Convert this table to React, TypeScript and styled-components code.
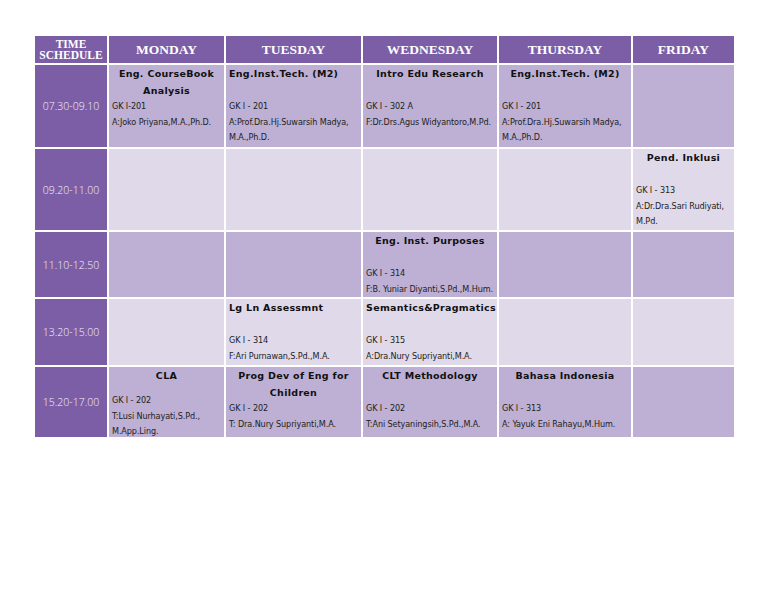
import React from 'react'
import styled, { createGlobalStyle } from 'styled-components'

const GlobalStyle = createGlobalStyle`
  html, body {
    margin: 0;
    padding: 0;
    background: #ffffff;
  }
`

const Page = styled.div`
  width: 768px;
  height: 594px;
  padding: 36px 0 0 35px;
  box-sizing: border-box;
  background: #ffffff;
`

const Grid = styled.div`
  display: grid;
  grid-template-columns: 72px 115px 135px 134px 132px 101px;
  grid-template-rows: 27px 82px 81px 65px 66px 70px;
  gap: 2px;
  width: 699px;
  background: #ffffff;
`

const HeadCell = styled.div<{ $small?: boolean }>`
  background: #7b5ea6;
  color: #ffffff;
  display: flex;
  align-items: center;
  justify-content: center;
  text-align: center;
  font-family: "Liberation Serif", "Times New Roman", serif;
  font-weight: bold;
  font-size: ${(p) => (p.$small ? '11.5px' : '13.5px')};
  line-height: ${(p) => (p.$small ? '11px' : '16px')};
`

const TimeCell = styled.div`
  background: #7b5ea6;
  color: #f4f0fa;
  display: flex;
  align-items: center;
  justify-content: center;
  font-family: "Open Sans", "Liberation Sans", Arial, sans-serif;
  font-weight: 300;
  font-size: 10.5px;
`

const SlotCell = styled.div<{ $light: boolean }>`
  background: ${(p) => (p.$light ? '#dfd9ea' : '#bdb0d4')};
  padding: 0 3px;
  box-sizing: border-box;
  overflow: hidden;
`

const Title = styled.div<{ $tight?: boolean; $left?: boolean }>`
  font-family: "DejaVu Sans", Verdana, sans-serif;
  font-weight: bold;
  font-size: 9.5px;
  line-height: 17px;
  letter-spacing: 0.3px;
  text-align: ${(p) => (p.$left ? 'left' : 'center')};
  color: #111111;
  min-height: ${(p) => (p.$tight ? '26px' : '34px')};
`

const Detail = styled.div`
  font-family: "DejaVu Sans Condensed", "Liberation Sans Narrow", "Liberation Sans", sans-serif;
  font-size: 9px;
  letter-spacing: -0.1px;
  line-height: 15.5px;
  color: #222222;
  white-space: nowrap;
`

type Slot = { title: string; lines: string[]; tight?: boolean; left?: boolean } | null

type Row = { time: string; slots: Slot[] }

const days = ['MONDAY', 'TUESDAY', 'WEDNESDAY', 'THURSDAY', 'FRIDAY']

const rows: Row[] = [
  {
    time: '07.30-09.10',
    slots: [
      { title: 'Eng. CourseBook Analysis', lines: ['GK I-201', 'A:Joko Priyana,M.A.,Ph.D.'] },
      { title: 'Eng.Inst.Tech. (M2)', left: true, lines: ['GK I - 201', 'A:Prof.Dra.Hj.Suwarsih Madya,', 'M.A.,Ph.D.'] },
      { title: 'Intro Edu Research', lines: ['GK I - 302 A', 'F:Dr.Drs.Agus Widyantoro,M.Pd.'] },
      { title: 'Eng.Inst.Tech. (M2)', lines: ['GK I - 201', 'A:Prof.Dra.Hj.Suwarsih Madya,', 'M.A.,Ph.D.'] },
      null,
    ],
  },
  {
    time: '09.20-11.00',
    slots: [
      null,
      null,
      null,
      null,
      { title: 'Pend. Inklusi', lines: ['GK I - 313', 'A:Dr.Dra.Sari Rudiyati,', 'M.Pd.'] },
    ],
  },
  {
    time: '11.10-12.50',
    slots: [
      null,
      null,
      { title: 'Eng. Inst. Purposes', lines: ['GK I - 314', 'F:B. Yuniar Diyanti,S.Pd.,M.Hum.'] },
      null,
      null,
    ],
  },
  {
    time: '13.20-15.00',
    slots: [
      null,
      { title: 'Lg Ln Assessmnt', left: true, lines: ['GK I - 314', 'F:Ari Purnawan,S.Pd.,M.A.'] },
      { title: 'Semantics&Pragmatics', left: true, lines: ['GK I - 315', 'A:Dra.Nury Supriyanti,M.A.'] },
      null,
      null,
    ],
  },
  {
    time: '15.20-17.00',
    slots: [
      { title: 'CLA', tight: true, lines: ['GK I - 202', 'T:Lusi Nurhayati,S.Pd.,', 'M.App.Ling.'] },
      { title: 'Prog Dev of Eng for Children', lines: ['GK I - 202', 'T: Dra.Nury Supriyanti,M.A.'] },
      { title: 'CLT Methodology', lines: ['GK I - 202', 'T:Ani Setyaningsih,S.Pd.,M.A.'] },
      { title: 'Bahasa Indonesia', lines: ['GK I - 313', 'A: Yayuk Eni Rahayu,M.Hum.'] },
      null,
    ],
  },
]

export default function App() {
  return (
    <>
      <GlobalStyle />
      <Page>
        <Grid>
          <HeadCell $small>
            TIME
            <br />
            SCHEDULE
          </HeadCell>
          {days.map((d) => (
            <HeadCell key={d}>{d}</HeadCell>
          ))}
          {rows.map((row, ri) => (
            <React.Fragment key={row.time}>
              <TimeCell>{row.time}</TimeCell>
              {row.slots.map((slot, si) => (
                <SlotCell key={si} $light={ri % 2 === 1}>
                  {slot && (
                    <>
                      <Title $tight={slot.tight} $left={slot.left}>
                        {slot.title}
                      </Title>
                      {slot.lines.map((l) => (
                        <Detail key={l}>{l}</Detail>
                      ))}
                    </>
                  )}
                </SlotCell>
              ))}
            </React.Fragment>
          ))}
        </Grid>
      </Page>
    </>
  )
}
